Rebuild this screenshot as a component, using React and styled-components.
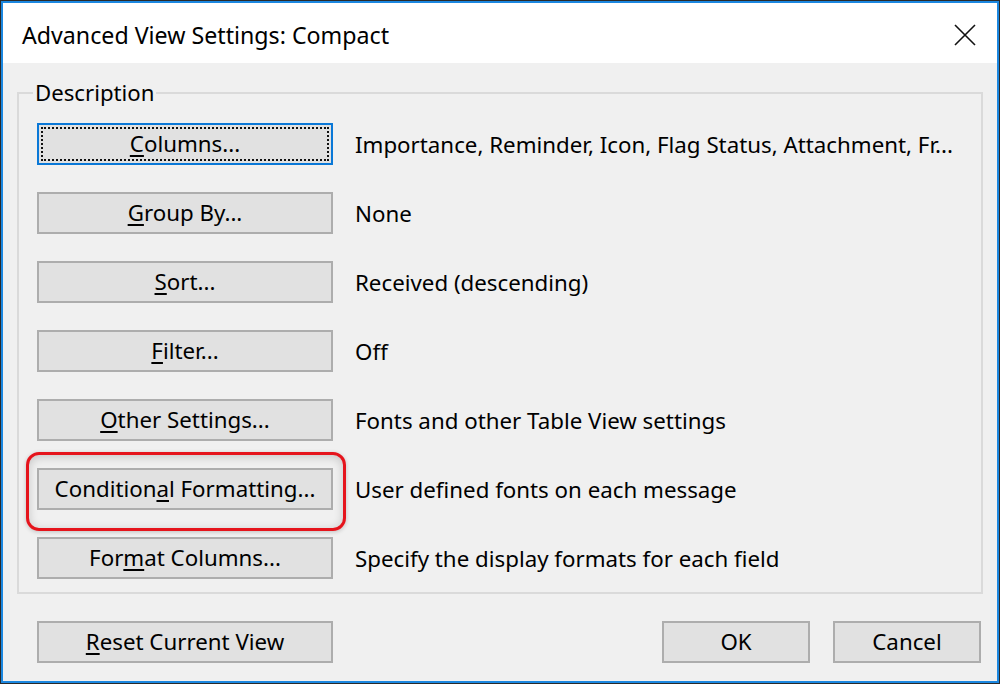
import React from 'react';
import styled, { createGlobalStyle } from 'styled-components';

const GlobalStyle = createGlobalStyle`
	html, body {
		margin: 0;
		padding: 0;
		background: #f0f0f0;
	}
	* {
		box-sizing: border-box;
	}
`;

const Window = styled.div`
	width: 1000px;
	height: 684px;
	display: flex;
	flex-direction: column;
	border: 1px solid #2a2a2a;
	font-family: 'Noto Sans', 'Open Sans', sans-serif;
	color: #000;
	overflow: hidden;
`;

const Frame = styled.div`
	flex: 1;
	display: flex;
	flex-direction: column;
	border: 2px solid #1b87e0;
`;

const TitleBar = styled.div`
	height: 60px;
	background: #fff;
	display: flex;
	align-items: center;
	justify-content: space-between;
	padding: 3px 20px 0 19px;
`;

const Title = styled.h1`
	margin: 0;
	font-size: 23.2px;
	font-weight: 400;
`;

const CloseButton = styled.button`
	width: 24px;
	height: 24px;
	padding: 0;
	border: none;
	background: transparent;
	display: flex;
	align-items: center;
	justify-content: center;
`;

const Body = styled.div`
	flex: 1;
	background: #f0f0f0;
	display: flex;
	flex-direction: column;
	padding: 17px 14px 0 14px;
`;

const GroupBox = styled.fieldset`
	margin: 0;
	border: 2px solid #dadada;
	padding: 17px 18px 13px 18px;
	min-width: 0;
`;

const Legend = styled.legend`
	font-size: 22.2px;
	line-height: 26px;
	padding: 0 2px;
	margin-left: -4px;
`;

const Rows = styled.div`
	display: grid;
	grid-template-columns: 296px 1fr;
	column-gap: 22px;
	row-gap: 27px;
	align-items: center;
`;

const Button = styled.button`
	position: relative;
	width: ${(p) => p.$width || 296}px;
	height: 42px;
	background: #e1e1e1;
	border: 2px solid ${(p) => (p.$focused ? '#0a78d7' : '#adadad')};
	font-family: inherit;
	font-size: 22.3px;
	line-height: 1;
	color: #000;
	padding: 0;
	outline: ${(p) => (p.$focused ? '2px dotted #111' : 'none')};
	outline-offset: -6px;

	u {
		text-decoration-thickness: 2px;
		text-underline-offset: 3px;
	}
`;

const Cell = styled.div`
	position: relative;
`;

const Highlight = styled.div`
	position: absolute;
	left: -11px;
	top: -16px;
	right: -13px;
	bottom: -21px;
	border: 3px solid #e5141c;
	border-radius: 13px;
	box-shadow: inset 0 2px 10px rgba(0, 0, 0, 0.18), 0 1px 4px rgba(0, 0, 0, 0.2);
	pointer-events: none;
`;

const Description = styled.span`
	font-size: 22.3px;
	white-space: nowrap;
`;

const Footer = styled.div`
	display: flex;
	align-items: center;
	gap: 23px;
	padding: 27px 2px 0 20px;
`;

const Spacer = styled.div`
	flex: 1;
`;

const rows = [
	{ pre: '', key: 'C', post: 'olumns...', desc: 'Importance, Reminder, Icon, Flag Status, Attachment, Fr...', focused: true },
	{ pre: '', key: 'G', post: 'roup By...', desc: 'None' },
	{ pre: '', key: 'S', post: 'ort...', desc: 'Received (descending)' },
	{ pre: '', key: 'F', post: 'ilter...', desc: 'Off' },
	{ pre: '', key: 'O', post: 'ther Settings...', desc: 'Fonts and other Table View settings' },
	{ pre: 'Condition', key: 'a', post: 'l Formatting...', desc: 'User defined fonts on each message', marked: true },
	{ pre: 'For', key: 'm', post: 'at Columns...', desc: 'Specify the display formats for each field' },
];

const CloseIcon = () => (
	<svg width="22" height="22" viewBox="0 0 22 22">
		<path d="M1 1 L21 21 M21 1 L1 21" stroke="#111" strokeWidth="1.6" fill="none" />
	</svg>
);

export default function App() {
	return (
		<>
			<GlobalStyle />
			<Window>
				<Frame>
					<TitleBar>
						<Title>Advanced View Settings: Compact</Title>
						<CloseButton aria-label="Close">
							<CloseIcon />
						</CloseButton>
					</TitleBar>
					<Body>
						<GroupBox>
							<Legend>Description</Legend>
							<Rows>
								{rows.map((r) => (
									<React.Fragment key={r.desc}>
										<Cell>
											{r.marked && <Highlight />}
											<Button $focused={r.focused}>
												{r.pre}
												<u>{r.key}</u>
												{r.post}
											</Button>
										</Cell>
										<Description>{r.desc}</Description>
									</React.Fragment>
								))}
							</Rows>
						</GroupBox>
						<Footer>
							<Button>
								<u>R</u>eset Current View
							</Button>
							<Spacer />
							<Button $width={148}>OK</Button>
							<Button $width={148}>Cancel</Button>
						</Footer>
					</Body>
				</Frame>
			</Window>
		</>
	);
}
